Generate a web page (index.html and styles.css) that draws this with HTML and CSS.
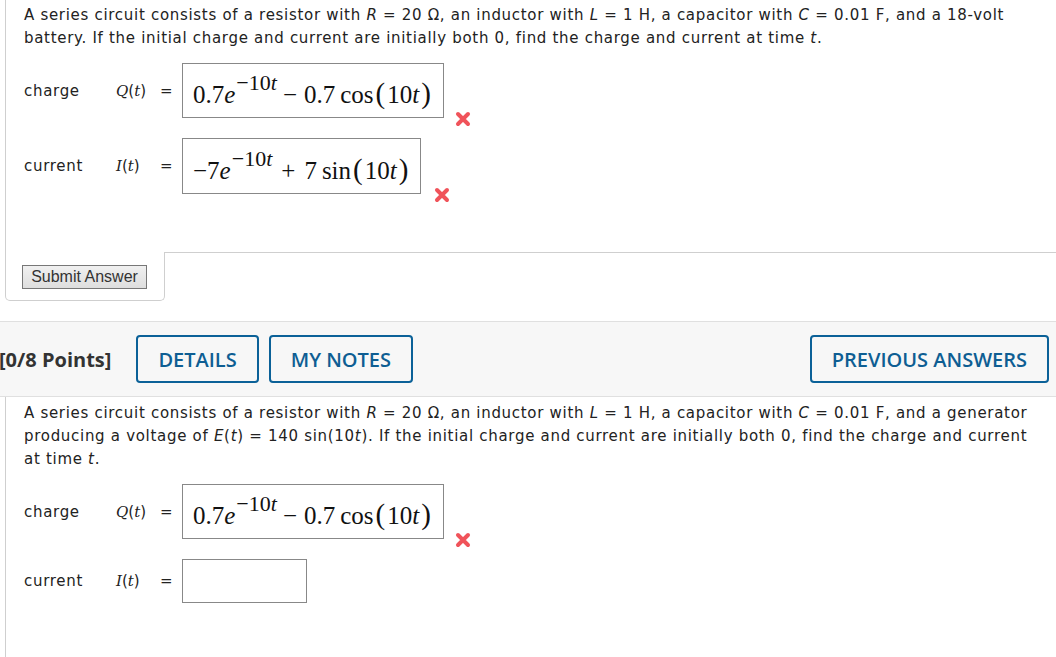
FILE: index.html
```
<!DOCTYPE html>
<html>
<head>
<meta charset="utf-8">
<link rel="stylesheet" href="styles.css">
</head>
<body>
<div class="q q1">
  <p class="prompt">A series circuit consists of a resistor with <i>R</i> = 20 Ω, an inductor with <i>L</i> = 1 H, a capacitor with <i>C</i> = 0.01 F, and a 18-volt battery. If the initial charge and current are initially both 0, find the charge and current at time <i>t</i>.</p>
  <div class="row">
    <span class="lbl">charge</span>
    <span class="fn"><i>Q</i>(<i>t</i>)</span>
    <span class="eq">=</span>
    <span class="box box-q"><span class="m">0.7<i>e</i><sup>−10<i>t</i></sup><span class="op">−</span>0.7<span class="sp"></span>cos<span class="paren">(</span>10<i>t</i><span class="paren">)</span></span></span>
    <span class="x"><svg viewBox="0 0 16 16" width="16" height="16"><path d="M3 3 L13 13 M13 3 L3 13" stroke="#f0535a" stroke-width="4" stroke-linecap="round"/></svg></span>
  </div>
  <div class="row">
    <span class="lbl">current</span>
    <span class="fn"><i>I</i>(<i>t</i>)</span>
    <span class="eq">=</span>
    <span class="box box-i"><span class="m">−7<i>e</i><sup>−10<i>t</i></sup><span class="op op-plus">+</span>7<span class="sp"></span>sin<span class="paren">(</span>10<i>t</i><span class="paren">)</span></span></span>
    <span class="x x-wide"><svg viewBox="0 0 16 16" width="16" height="16"><path d="M3 3 L13 13 M13 3 L3 13" stroke="#f0535a" stroke-width="4" stroke-linecap="round"/></svg></span>
  </div>
</div>
<div class="tabrow">
  <div class="tab"><button class="submit">Submit Answer</button></div>
  <div class="filler"></div>
</div>
<div class="header">
  <span class="points">[0/8 Points]</span>
  <span class="btn">DETAILS</span>
  <span class="btn">MY NOTES</span>
  <span class="spacer"></span>
  <span class="btn">PREVIOUS ANSWERS</span>
</div>
<div class="q q2">
  <p class="prompt">A series circuit consists of a resistor with <i>R</i> = 20 Ω, an inductor with <i>L</i> = 1 H, a capacitor with <i>C</i> = 0.01 F, and a generator producing a voltage of <i>E</i>(<i>t</i>) = 140 sin(10<i>t</i>). If the initial charge and current are initially both 0, find the charge and current at time <i>t</i>.</p>
  <div class="row">
    <span class="lbl">charge</span>
    <span class="fn"><i>Q</i>(<i>t</i>)</span>
    <span class="eq">=</span>
    <span class="box box-q"><span class="m">0.7<i>e</i><sup>−10<i>t</i></sup><span class="op">−</span>0.7<span class="sp"></span>cos<span class="paren">(</span>10<i>t</i><span class="paren">)</span></span></span>
    <span class="x"><svg viewBox="0 0 16 16" width="16" height="16"><path d="M3 3 L13 13 M13 3 L3 13" stroke="#f0535a" stroke-width="4" stroke-linecap="round"/></svg></span>
  </div>
  <div class="row">
    <span class="lbl">current</span>
    <span class="fn"><i>I</i>(<i>t</i>)</span>
    <span class="eq">=</span>
    <span class="box box-empty"></span>
  </div>
</div>
</body>
</html>
```
FILE: styles.css
```
html, body {
  margin: 0;
  padding: 0;
  background: #fff;
  overflow: hidden;
}
body {
  width: 1056px;
  height: 657px;
  font-family: "DejaVu Sans", Verdana, sans-serif;
  font-size: 15px;
  letter-spacing: 0.7px;
  color: #222;
}
.q {
  margin-left: 5px;
  border-left: 1px solid #cfcfcf;
  padding-left: 18px;
  padding-right: 24px;
}
.q1 {
  padding-top: 4px;
  padding-bottom: 58px;
}
.q2 {
  padding-top: 5px;
  height: 260px;
}
.prompt {
  margin: 0;
  line-height: 23px;
}
.prompt i {
  font-style: italic;
}
.row {
  display: flex;
  align-items: center;
  margin-top: 13px;
}
.row + .row {
  margin-top: 20px;
}
.lbl {
  width: 92px;
}
.fn {
  width: 44px;
  letter-spacing: 0;
}
.fn i {
  font-family: "DejaVu Serif", serif;
  font-style: italic;
}
.eq {
  width: 22px;
  letter-spacing: 0;
}
.box {
  display: flex;
  align-items: center;
  border: 1px solid #888;
  box-sizing: border-box;
  padding: 0 10px 0 10px;
  letter-spacing: 0;
}
.box-q { height: 55px; }
.box-i { height: 56px; }
.box-empty {
  width: 125px;
  height: 44px;
}
.m {
  font-family: "Liberation Serif", "Times New Roman", serif;
  font-size: 25px;
  color: #111;
  white-space: nowrap;
  position: relative;
  top: 3px;
}
.m i { font-style: italic; }
.m sup {
  font-size: 22px;
  vertical-align: 13px;
  line-height: 0;
  margin-left: 1px;
}
.op {
  margin: 0 7px 0 6px;
}
.op-plus {
  margin: 0 9px 0 9px;
}
.sp { display: inline-block; width: 5px; }
.paren {
  font-size: 29px;
  margin: 0 2px;
}
.x {
  align-self: flex-end;
  margin-bottom: -9px;
  margin-left: 11px;
  display: flex;
}
.x-wide {
  margin-left: 13px;
}
.tabrow {
  display: flex;
  margin-left: 5px;
}
.tab {
  width: 160px;
  height: 49px;
  border: 1px solid #cfcfcf;
  border-top: none;
  border-radius: 0 0 5px 5px;
  padding: 13px 0 0 16px;
  box-sizing: border-box;
}
.filler {
  flex: 1;
  border-top: 1px solid #cfcfcf;
}
.submit {
  font-family: "Liberation Sans", Arial, sans-serif;
  font-size: 16px;
  letter-spacing: 0;
  color: #333;
  background: linear-gradient(#f0f0f0, #dedede);
  border: 1px solid #777;
  border-radius: 0;
  height: 24px;
  width: 125px;
  padding: 0;
}
.header {
  margin-top: 20px;
  height: 74px;
  background: #f7f7f7;
  border-top: 1px solid #e0e0e0;
  border-bottom: 1px solid #e0e0e0;
  display: flex;
  align-items: center;
  font-family: "Open Sans", sans-serif;
  letter-spacing: 0;
  padding-right: 7px;
}
.points {
  font-weight: 700;
  font-size: 20px;
  color: #333;
  margin-left: -1px;
  margin-right: 25px;
}
.btn {
  border: 2px solid #0b6198;
  border-radius: 4px;
  height: 48px;
  box-sizing: border-box;
  display: flex;
  align-items: center;
  padding: 0 20px;
  color: #0e5e93;
  font-weight: 600;
  font-size: 20px;
  background: #f7f7f7;
  margin-right: 10px;
}
.btn:last-child { margin-right: 0; }
.spacer { flex: 1; }
```
